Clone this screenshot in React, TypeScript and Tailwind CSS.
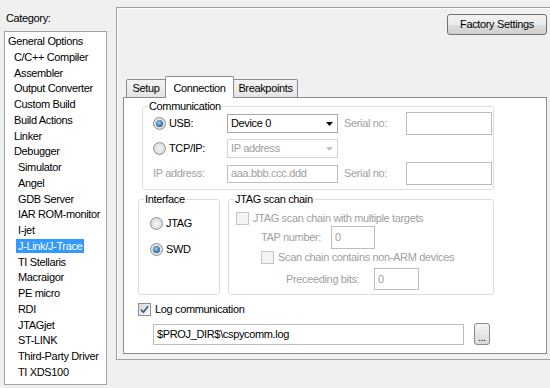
import React from "react";

const categories: [string, number][] = [
  ["General Options", 0],
  ["C/C++ Compiler", 1],
  ["Assembler", 1],
  ["Output Converter", 1],
  ["Custom Build", 1],
  ["Build Actions", 1],
  ["Linker", 1],
  ["Debugger", 1],
  ["Simulator", 2],
  ["Angel", 2],
  ["GDB Server", 2],
  ["IAR ROM-monitor", 2],
  ["I-jet", 2],
  ["J-Link/J-Trace", 2],
  ["TI Stellaris", 2],
  ["Macraigor", 2],
  ["PE micro", 2],
  ["RDI", 2],
  ["JTAGjet", 2],
  ["ST-LINK", 2],
  ["Third-Party Driver", 2],
  ["TI XDS100", 2],
];

const indent = ["pl-[0px]", "pl-[6px]", "pl-[10px]"];

function Radio({ checked }: { checked?: boolean }) {
  return (
    <span className="w-[13px] h-[13px] rounded-full border border-[#8e8f8f] bg-[radial-gradient(circle,#f6f6f6,#d2d2d2)] flex items-center justify-center shrink-0">
      {checked && (
        <span className="w-[7px] h-[7px] rounded-full bg-[radial-gradient(circle_at_45%_40%,#9ad6f7,#1d5b86_75%)]" />
      )}
    </span>
  );
}

function Check({ checked, disabled }: { checked?: boolean; disabled?: boolean }) {
  return (
    <span
      className={
        disabled
          ? "w-[13px] h-[13px] border border-[#c6c6c6] bg-[#f4f4f4] flex items-center justify-center shrink-0"
          : "w-[13px] h-[13px] border border-[#8e8f8f] bg-[linear-gradient(135deg,#d8d8d8,#fafafa)] flex items-center justify-center shrink-0"
      }
    >
      {checked && (
        <svg width="9" height="9" viewBox="0 0 9 9">
          <path d="M1 4.6 L3.4 7.2 L8 1.2" fill="none" stroke="#3b5a94" strokeWidth="1.7" />
        </svg>
      )}
    </span>
  );
}

function Combo({ text, disabled }: { text: string; disabled?: boolean }) {
  return (
    <div
      className={
        disabled
          ? "w-[111px] h-[19px] border border-[#d4d4d4] bg-white flex items-center justify-between pl-[3px] pr-[4px] text-[#a0a0a0]"
          : "w-[111px] h-[19px] border border-[#a8a8a8] bg-white flex items-center justify-between pl-[3px] pr-[4px]"
      }
    >
      <span>{text}</span>
      <svg width="7" height="4" viewBox="0 0 7 4">
        <path d="M0 0 H7 L3.5 4 Z" fill={disabled ? "#c4c4c4" : "#000"} />
      </svg>
    </div>
  );
}

function Box({ text, w, h, gray }: { text?: string; w: string; h: string; gray?: boolean }) {
  return (
    <div className={`${w} ${h} border border-[#bdbdbd] bg-white flex items-center pl-[3px] ${gray ? "text-[#a0a0a0]" : ""}`}>
      {text}
    </div>
  );
}

function Group({ title, className, children }: { title: string; className: string; children: React.ReactNode }) {
  return (
    <div className={`relative border border-[#d5dfe5] rounded-[3px] ${className}`}>
      <span className="absolute -top-[8px] left-[5px] bg-white px-[1px] leading-[14px]">{title}</span>
      {children}
    </div>
  );
}

export default function App() {
  return (
    <div className="w-[550px] h-[388px] bg-[#f0f0f0] flex overflow-hidden font-['Liberation_Sans',Arial,sans-serif] text-[11px] tracking-[-0.35px] text-black">
      {/* Category list */}
      <div className="w-[116px] shrink-0 pl-[4px]">
        <div className="h-[31px] pl-[2px] pt-[11px] leading-[14px]">Category:</div>
        <div className="w-[103px] h-[354px] border border-[#a3a3a3] bg-white pt-[2px] pl-[1px]">
          {categories.map(([name, level]) => (
            <div key={name} className={`h-[15.75px] leading-[15.75px] ${indent[level]}`}>
              <span
                className={
                  name === "J-Link/J-Trace"
                    ? "inline-block px-[2px] leading-[14px] bg-[#3399ff] text-white"
                    : "inline-block px-[2px]"
                }
              >
                {name}
              </span>
            </div>
          ))}
        </div>
      </div>

      {/* Options page */}
      <div className="pt-[7px]">
        <div className="w-[440px] h-[353px] border border-[#a0a0a0] shadow-[inset_1px_1px_0_#ffffff]">
          <div className="ml-[330px] mt-[6px] w-[100px] h-[21px] border border-[#707070] rounded-[3px] bg-[linear-gradient(#f2f2f2,#ebebeb_50%,#dddddd_50%,#cfcfcf)] flex items-center justify-center">
            Factory Settings
          </div>

          <div className="ml-[6px] mt-[41px] w-[424px]">
            {/* tabs */}
            <div className="flex items-end h-[21px] pl-[3px]">
              <div className="w-[40px] h-[18px] border border-b-0 border-[#898c95] rounded-t-[2px] bg-[linear-gradient(#f3f3f3,#e4e4e4)] flex items-center justify-center">
                Setup
              </div>
              <div className="relative z-10 -ml-[1px] w-[69px] h-[22px] -mb-[1px] border border-b-0 border-[#898c95] rounded-t-[2px] bg-white flex items-start pt-[3px] justify-center">
                Connection
              </div>
              <div className="-ml-[1px] w-[65px] h-[18px] border border-b-0 border-[#898c95] rounded-t-[2px] bg-[linear-gradient(#f3f3f3,#e4e4e4)] flex items-center justify-center">
                Breakpoints
              </div>
            </div>

            {/* tab page */}
            <div className="h-[257px] border border-[#898c95] bg-white">
              <Group title="Communication" className="ml-[18px] mt-[8px] w-[352px] h-[84px]">
                <div className="pt-[4px] pl-[10px]">
                  <div className="h-[25px] flex items-center">
                    <div className="w-[74px] flex items-center gap-[3px]">
                      <Radio checked />
                      <span>USB:</span>
                    </div>
                    <Combo text="Device 0" />
                    <span className="ml-[6px] w-[62px] text-[#a0a0a0]">Serial no:</span>
                    <Box w="w-[86px]" h="h-[23px]" />
                  </div>
                  <div className="h-[25px] flex items-center">
                    <div className="w-[74px] flex items-center gap-[3px]">
                      <Radio />
                      <span>TCP/IP:</span>
                    </div>
                    <Combo text="IP address" disabled />
                  </div>
                  <div className="h-[25px] flex items-center">
                    <div className="w-[74px] text-[#a0a0a0]">IP address:</div>
                    <Box text="aaa.bbb.ccc.ddd" w="w-[111px]" h="h-[18px]" gray />
                    <span className="ml-[6px] w-[62px] text-[#a0a0a0]">Serial no:</span>
                    <Box w="w-[86px]" h="h-[23px]" />
                  </div>
                </div>
              </Group>

              <div className="flex mt-[9px]">
                <Group title="Interface" className="ml-[14px] w-[82px] h-[96px]">
                  <div className="pt-[13px] pl-[11px] flex flex-col gap-[6px]">
                    <div className="h-[20px] flex items-center gap-[3px]">
                      <Radio />
                      <span>JTAG</span>
                    </div>
                    <div className="h-[20px] flex items-center gap-[3px]">
                      <Radio checked />
                      <span>SWD</span>
                    </div>
                  </div>
                </Group>

                <Group title="JTAG scan chain" className="ml-[8px] w-[266px] h-[96px]">
                  <div className="pt-[10px] pl-[7px] text-[#a0a0a0]">
                    <div className="h-[16px] flex items-center gap-[4px]">
                      <Check disabled />
                      <span>JTAG scan chain with multiple targets</span>
                    </div>
                    <div className="h-[23px] flex items-center pl-[25px]">
                      <span className="w-[70px]">TAP number:</span>
                      <Box text="0" w="w-[44px]" h="h-[23px]" gray />
                    </div>
                    <div className="h-[16px] flex items-center gap-[4px] pl-[25px]">
                      <Check disabled />
                      <span>Scan chain contains non-ARM devices</span>
                    </div>
                    <div className="mt-[3px] h-[22px] flex items-center pl-[50px]">
                      <span className="w-[88px]">Preceeding bits:</span>
                      <Box text="0" w="w-[45px]" h="h-[22px]" gray />
                    </div>
                  </div>
                </Group>
              </div>

              <div className="mt-[7px] ml-[14px] h-[14px] flex items-center gap-[4px]">
                <Check checked />
                <span>Log communication</span>
              </div>
              <div className="mt-[7px] ml-[29px] flex items-center gap-[10px]">
                <Box text="$PROJ_DIR$\cspycomm.log" w="w-[311px]" h="h-[21px]" />
                <div className="w-[16px] h-[22px] border border-[#8a8a8a] rounded-[3px] bg-[linear-gradient(#f4f4f4,#dadada)] flex items-end justify-center pb-[2px] leading-[8px] text-[10px]">
                  ...
                </div>
              </div>
            </div>
          </div>
        </div>
      </div>
    </div>
  );
}
